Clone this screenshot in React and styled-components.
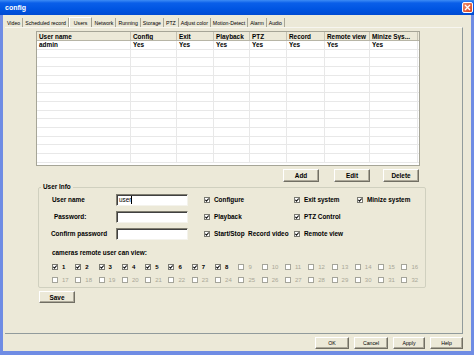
import styled, { createGlobalStyle } from "styled-components";

const Global = createGlobalStyle`
  html, body { margin: 0; padding: 0; background: #ffffff; }
  * { box-sizing: border-box; }
`;

const Window = styled.div`
  width: 474px;
  height: 355px;
  display: flex;
  flex-direction: column;
  background: #6f8ce4;
  font-family: "Liberation Sans", Arial, sans-serif;
  color: #000;
  overflow: hidden;
`;

const TitleBar = styled.div`
  height: 15px;
  flex: none;
  display: flex;
  align-items: center;
  justify-content: space-between;
  padding: 0 1px 0 5px;
  background: linear-gradient(#3d8cf5 0%, #0a5fe9 20%, #0055e2 60%, #004bd2 100%);
  color: #fff;
  font-weight: bold;
  font-size: 7px;
`;

const CloseBtn = styled.div`
  width: 11px;
  height: 11px;
  border: 1px solid #fff;
  border-radius: 2px;
  background: linear-gradient(135deg, #f08d6e, #d9421d);
  display: flex;
  align-items: center;
  justify-content: center;
`;

const Body = styled.div`
  flex: 1;
  margin: 0 3px 4px 3px;
  background: #ece9d8;
  display: flex;
  flex-direction: column;
  padding: 2px 8px 0 2px;
`;

const TabStrip = styled.div`
  height: 10px;
  display: flex;
  align-items: flex-end;
  font-size: 5.2px;
`;

const Tab = styled.div`
  height: ${(p) => (p.active ? "10px" : "9px")};
  padding: 0 ${(p) => (p.active ? "4px" : "2px")};
  display: flex;
  align-items: center;
  border-right: 1px solid ${(p) => (p.active ? "#9d9b8d" : "#a9a797")};
  border-left: ${(p) => (p.active ? "1px solid #fff" : "none")};
  border-top: ${(p) => (p.active ? "1px solid #fff" : "none")};
  background: #ece9d8;
  white-space: nowrap;
`;

const Panel = styled.div`
  height: 307px;
  border-right: 1px solid #919b9c;
  border-bottom: 1px solid #919b9c;
  border-top: 1px solid #f7f6f0;
  display: flex;
  flex-direction: column;
  align-items: flex-start;
`;

const ListView = styled.div`
  margin: 3px 0 0 31px;
  width: 384px;
  height: 135px;
  background: #fff;
  border: 1px solid #a6a597;
  overflow: hidden;
`;

const Row = styled.div`
  display: grid;
  grid-template-columns: 94px 46px 37px 36px 37px 38px 45px 48px;
  height: ${(p) => (p.header ? "9px" : "8.7px")};
  background: ${(p) => (p.header ? "#ece9d8" : "#fff")};
  border-bottom: 1px solid ${(p) => (p.header ? "#b7b5a6" : "#e8e8e8")};
  font-size: 6.4px;
  font-weight: bold;
`;

const Cell = styled.div`
  padding-left: 2px;
  display: flex;
  align-items: center;
  border-right: 1px solid ${(p) => (p.header ? "#c5c2b2" : "#e8e8e8")};
  white-space: nowrap;
  overflow: hidden;
`;

const ButtonRow = styled.div`
  margin: 3px 0 0 ${(p) => p.left}px;
  display: flex;
`;

const Button = styled.div`
  width: ${(p) => p.w || 36}px;
  height: ${(p) => p.h || 13}px;
  margin-left: ${(p) => p.ml || 0}px;
  border: 1px solid;
  border-color: #fff #716f64 #716f64 #fff;
  box-shadow: inset -1px -1px 0 #aca899;
  background: #ece9d8;
  display: flex;
  align-items: center;
  justify-content: center;
  font-size: ${(p) => (p.bold ? "6.4px" : "5.2px")};
  font-weight: ${(p) => (p.bold ? "bold" : "normal")};
`;

const GroupBox = styled.fieldset`
  margin: 1px 0 0 33px;
  padding: 0;
  width: 385px;
  height: 105px;
  border: 1px solid #d0d0bf;
  border-radius: 2px;
`;

const Legend = styled.legend`
  margin-left: 2px;
  padding: 0 2px;
  font-size: 6.4px;
  font-weight: bold;
  line-height: 8px;
`;

const FormGrid = styled.div`
  display: grid;
  grid-template-columns: 77px 72px 16px 90px 63px 1fr;
  grid-auto-rows: 17px;
  padding-top: 0;
  font-size: 6.4px;
  font-weight: bold;
  align-items: center;
`;

const Label = styled.div`
  padding-left: ${(p) => p.indent}px;
  white-space: nowrap;
`;

const TextBox = styled.div`
  height: 12px;
  background: #fff;
  border: 1px solid;
  border-color: #7f7d70 #f4f3ec #f4f3ec #7f7d70;
  box-shadow: inset 1px 1px 0 #404040;
  display: flex;
  align-items: center;
  padding-left: 2px;
  font-weight: normal;
  font-size: 6.4px;
`;

const Caret = styled.span`
  width: 1px;
  height: 8px;
  background: #000;
`;

const CheckItem = styled.div`
  display: flex;
  align-items: center;
  gap: 4px;
  white-space: nowrap;
  color: ${(p) => (p.dim ? "#a9a797" : "#000")};
  font-weight: ${(p) => (p.dim ? "normal" : "bold")};
`;

const Box = styled.span`
  width: 6px;
  height: 6px;
  flex: none;
  border: 1px solid ${(p) => (p.on ? "#7a7a72" : "#a4a49a")};
  background: #fff;
  display: flex;
  align-items: center;
  justify-content: center;
`;

const Cameras = styled.div`
  padding-left: 13px;
  font-size: 6.4px;
  font-weight: bold;
  margin-top: 7px;
`;

const CamGrid = styled.div`
  display: grid;
  grid-template-columns: repeat(16, 23.3px);
  grid-auto-rows: 13px;
  align-items: center;
  padding: 4px 0 0 13px;
  font-size: 6px;
`;

const Footer = styled.div`
  display: flex;
  justify-content: flex-end;
  gap: 5px;
  padding: 3px 0 0 0;
`;

const Check = ({ on, dim, children }) => (
  <CheckItem dim={dim}>
    <Box on={on}>
      {on && (
        <svg width="4" height="4" viewBox="0 0 4 4">
          <path d="M0.3 1.8 L1.5 3.1 L3.7 0.6" stroke="#111" strokeWidth="1.1" fill="none" />
        </svg>
      )}
    </Box>
    {children}
  </CheckItem>
);

const tabs = ["Video", "Scheduled record", "Users", "Network", "Running", "Storage", "PTZ", "Adjust color", "Motion-Detect", "Alarm", "Audio"];
const headers = ["User name", "Config", "Exit", "Playback", "PTZ", "Record", "Remote view", "Minize Sys..."];
const admin = ["admin", "Yes", "Yes", "Yes", "Yes", "Yes", "Yes", "Yes"];

export default function App() {
  const cams = Array.from({ length: 32 }, (_, i) => i + 1);
  return (
    <Window>
      <Global />
      <TitleBar>
        config
        <CloseBtn>
          <svg width="7" height="7" viewBox="0 0 7 7">
            <path d="M1 1 L6 6 M6 1 L1 6" stroke="#fff" strokeWidth="1.4" />
          </svg>
        </CloseBtn>
      </TitleBar>
      <Body>
        <TabStrip>
          {tabs.map((t) => (
            <Tab key={t} active={t === "Users"}>{t}</Tab>
          ))}
        </TabStrip>
        <Panel>
          <ListView>
            <Row header>
              {headers.map((h) => (
                <Cell header key={h}>{h}</Cell>
              ))}
            </Row>
            <Row>
              {admin.map((v, i) => (
                <Cell key={i}>{v}</Cell>
              ))}
            </Row>
            {Array.from({ length: 13 }, (_, r) => (
              <Row key={r}>
                {headers.map((h) => (
                  <Cell key={h} />
                ))}
              </Row>
            ))}
          </ListView>
          <ButtonRow left={278}>
            <Button bold>Add</Button>
            <Button bold ml={15}>Edit</Button>
            <Button bold ml={13}>Delete</Button>
          </ButtonRow>
          <GroupBox>
            <Legend>User Info</Legend>
            <FormGrid>
              <Label indent={13}>User name</Label>
              <TextBox>user<Caret /></TextBox>
              <span />
              <Check on>Configure</Check>
              <Check on>Exit system</Check>
              <Check on>Minize system</Check>

              <Label indent={15}>Password:</Label>
              <TextBox />
              <span />
              <Check on>Playback</Check>
              <Check on>PTZ Control</Check>
              <span />

              <Label indent={12}>Confirm password</Label>
              <TextBox />
              <span />
              <Check on>Start/Stop&nbsp;&nbsp;Record video</Check>
              <Check on>Remote view</Check>
              <span />
            </FormGrid>
            <Cameras>cameras remote user can view:</Cameras>
            <CamGrid>
              {cams.map((n) => (
                <Check key={n} on={n <= 8} dim={n > 8}>{n}</Check>
              ))}
            </CamGrid>
          </GroupBox>
          <ButtonRow left={34}>
            <Button bold h={12}>Save</Button>
          </ButtonRow>
        </Panel>
        <Footer>
          <Button w={34} h={12}>OK</Button>
          <Button w={34} h={12}>Cancel</Button>
          <Button w={32} h={12}>Apply</Button>
          <Button w={33} h={12}>Help</Button>
        </Footer>
      </Body>
    </Window>
  );
}
